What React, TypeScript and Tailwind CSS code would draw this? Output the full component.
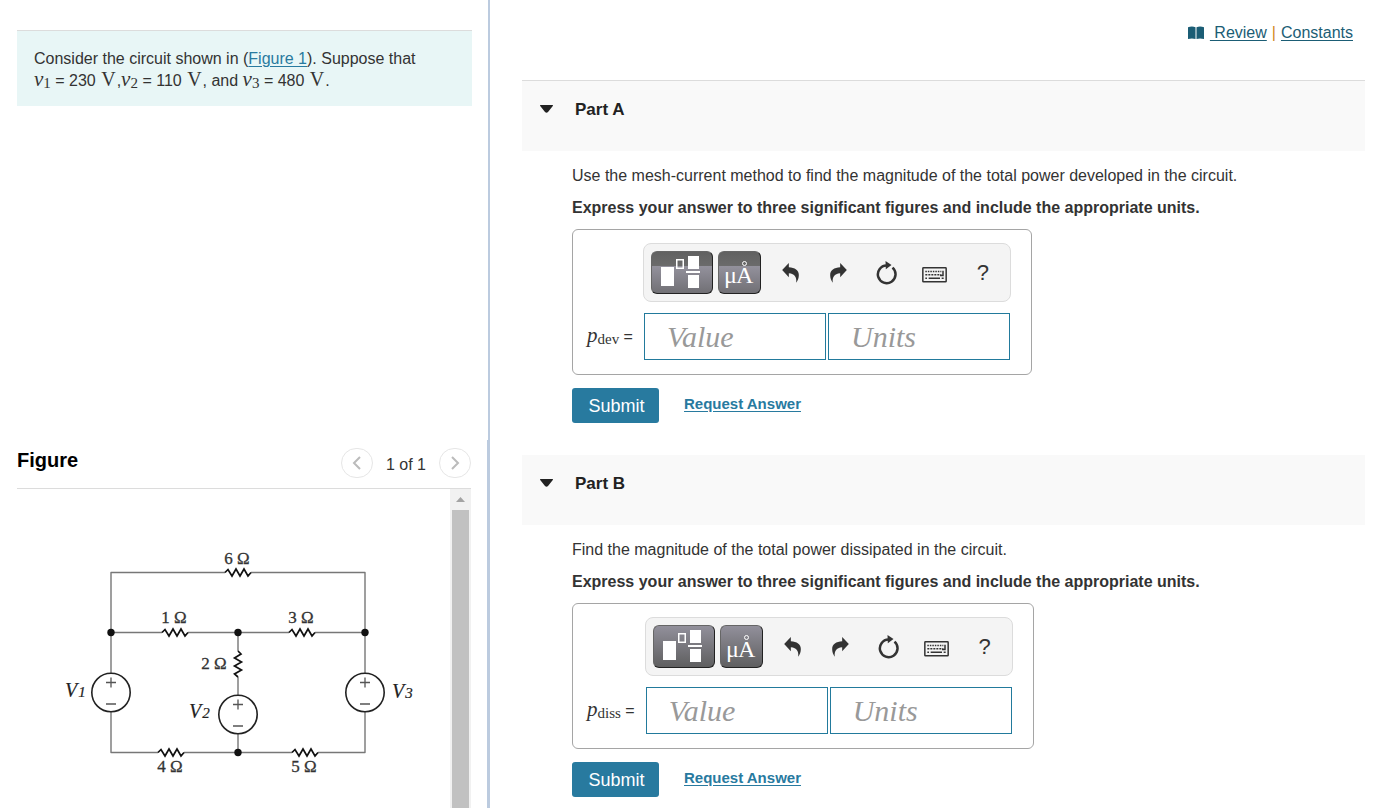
import React from "react";

const sans = "font-['Liberation_Sans',Arial,sans-serif]";
const serif = "font-['Liberation_Serif','Times_New_Roman',serif]";

function Sub({ base, sub }: { base: string; sub: string }) {
  return (
    <span className={serif}>
      <i className="text-[21px] leading-none">{base}</i>
      <span className="relative top-0.5 text-[15px] leading-none">{sub}</span>
    </span>
  );
}

function Volt() {
  return <span className={`${serif} mx-px text-[20px] leading-none`}>V</span>;
}

function Resistor({ x, y, vertical = false }: { x: number; y: number; vertical?: boolean }) {
  return (
    <g transform={`translate(${x} ${y})${vertical ? " rotate(90)" : ""}`}>
      <path d="M-13 0H13" stroke="#fff" strokeWidth="3" />
      <path d="M-13 0l3-3l4 6.500l4-7l4 7l4-7l4 7l3-3.500" fill="none" stroke="#111" strokeWidth="1.7" />
    </g>
  );
}

function Source({ x, y }: { x: number; y: number }) {
  return (
    <g fill="none" stroke="#222">
      <circle cx={x} cy={y} r="19.2" fill="#fff" strokeWidth="1.6" />
      <path d={`M${x - 5} ${y - 10}h10M${x} ${y - 15}v10M${x - 5} ${y + 11.5}h10`} stroke="#555" strokeWidth="1.3" />
    </g>
  );
}

const ohms = [
  { x: 220, y: 75, n: "6" },
  { x: 157, y: 134, n: "1" },
  { x: 284, y: 134, n: "3" },
  { x: 197, y: 180, n: "2" },
  { x: 153, y: 283, n: "4" },
  { x: 287, y: 283, n: "5" },
];

const sources = [
  { x: 48, y: 208, n: "1" },
  { x: 172, y: 229, n: "2" },
  { x: 375, y: 209, n: "3" },
];

function Circuit() {
  return (
    <svg width="433" height="319" viewBox="0 0 433 319" role="img" aria-label="Circuit diagram" className={`shrink-0 ${serif}`}>
      <path
        d="M94 83.5H348V263.5H94ZM94 143.5H348M221 143.5V263.5"
        fill="none"
        stroke="#777"
        strokeWidth="1.4"
        strokeLinejoin="round"
      />
      <Resistor x={221} y={83.5} />
      <Resistor x={158} y={143.5} />
      <Resistor x={285} y={143.5} />
      <Resistor x={154} y={263.5} />
      <Resistor x={288} y={263.5} />
      <Resistor x={221} y={175} vertical />
      <Source x={94} y={203.5} />
      <Source x={221} y={225.5} />
      <Source x={348} y={203.5} />
      <g fill="#111">
        <circle cx="94" cy="143.5" r="3.7" />
        <circle cx="221" cy="143.5" r="3.7" />
        <circle cx="348" cy="143.5" r="3.7" />
        <circle cx="221" cy="263.5" r="3.7" />
      </g>
      <g fill="#333" stroke="#333" strokeWidth="0.3" fontSize="17" textAnchor="middle">
        {ohms.map((o) => (
          <text key={o.n} x={o.x} y={o.y}>
            {o.n} Ω
          </text>
        ))}
      </g>
      <g fill="#222" stroke="#222" strokeWidth="0.2" fontStyle="italic" fontSize="20">
        {sources.map((s) => (
          <text key={s.n} x={s.x} y={s.y}>
            V<tspan fontSize="15" dx="1">{s.n}</tspan>
          </text>
        ))}
      </g>
    </svg>
  );
}

const arrowPath = "M0 21L20 0V13C38 14 50 22 50 36C50 46 47 53 42 59C44 44 38 32 20 31V43Z";

function UndoIcon() {
  return (
    <svg width="17" height="20" viewBox="0 0 50 60" fill="#333">
      <path d={arrowPath} />
    </svg>
  );
}

function RedoIcon() {
  return (
    <svg width="17" height="20" viewBox="0 0 50 60" fill="#333">
      <path d={arrowPath} transform="translate(50 0) scale(-1 1)" />
    </svg>
  );
}

function ResetIcon() {
  return (
    <svg width="21" height="24" viewBox="0 0 62 72">
      <path d="M49 20A26.5 26.5 0 1 1 31 13.5" fill="none" stroke="#333" strokeWidth="7.500" />
      <path d="M28 0L46 12L29 25Z" fill="#333" />
    </svg>
  );
}

function KeyboardIcon() {
  return (
    <svg width="25" height="16" viewBox="0 0 75 48" fill="none" stroke="#333">
      <rect x="2.5" y="2.5" width="70" height="42" rx="2" strokeWidth="4.5" />
      <path d="M10 13.5H58" strokeWidth="4.5" strokeDasharray="4.5 3" />
      <path d="M10 23.500H58" strokeWidth="4.5" strokeDasharray="6 3" />
      <path d="M63 11V25.500H54" strokeWidth="4.5" />
      <path d="M10 33.500h5M20 33.500h34M59 33.500h6" strokeWidth="4.5" />
    </svg>
  );
}

function TemplatesIcon() {
  return (
    <svg width="42" height="41" viewBox="0 0 42 41" fill="#fff">
      <rect x="0" y="15" width="13" height="19" />
      <rect x="15.750" y="7.750" width="6.500" height="8.500" fill="none" stroke="#fff" strokeWidth="1.500" />
      <rect x="27" y="4" width="11" height="13" />
      <rect x="25" y="19" width="14" height="2" />
      <rect x="27" y="23" width="11" height="13" />
    </svg>
  );
}

function SymbolsIcon() {
  return (
    <svg width="30" height="34" viewBox="0 0 30 34" fill="#fff" className={serif}>
      <text x="0" y="27" fontSize="24">μ</text>
      <text x="12" y="27" fontSize="24">A</text>
      <circle cx="20.500" cy="7.500" r="2" fill="none" stroke="#fff" />
    </svg>
  );
}

function BookIcon() {
  return (
    <svg width="16" height="14" viewBox="0 0 16 14" fill="#1b5d75" className="mr-1.5">
      <path d="M0 1.200Q4 -.2 7.500 1.200V13Q4 12 0 13ZM8.500 1.200Q12 -.2 16 1.200V13Q12 12 8.500 13Z" />
    </svg>
  );
}

const flatPalette = "bg-linear-to-b from-[#92909b] to-[#5f5f60]";
const splitPalette = "bg-[linear-gradient(#616161_0,#6b6b6b_34%,#93919c_35%,#717075_100%)]";

type PartProps = {
  title: string;
  question: string;
  sub: string;
  palette: string;
  divider?: boolean;
};

function Part({ title, question, sub, palette, divider = false }: PartProps) {
  const tool = "flex h-10 w-12 items-center justify-center text-[#333]";
  const key = "flex h-[43px] items-center justify-center rounded-md border border-[#666] border-r-[#222] border-b-[#222]";
  const field = `h-[47px] w-full min-w-0 border border-[#227a9c] bg-white pr-2 pl-[22px] text-[30px] italic text-[#333] outline-none placeholder:text-[#999] placeholder:opacity-100 ${serif}`;
  return (
    <section>
      <h2 className={divider ? "border-t border-[#dcdcdc] bg-[#f9f9f9]" : "bg-[#f9f9f9]"}>
        <button type="button" aria-expanded="true" className="flex h-[70px] w-full items-start pt-[18px] pl-[18px] text-left text-[17px] leading-[22px] font-bold text-[#222]">
          <svg width="13" height="8" viewBox="0 0 13 8" fill="#222" className="mt-1.5 mr-[22px]">
            <path d="M0 0H13Q13 1 12 2L8 7Q6.500 8.500 5 7L1 2Q0 1 0 0Z" />
          </svg>
          {title}
        </button>
      </h2>
      <div className="pt-[14px] pl-[50px] text-base leading-[22px] text-[#333]">
        <p>{question}</p>
        <p className="mt-2.5 font-bold">Express your answer to three significant figures and include the appropriate units.</p>
        <form onSubmit={(e) => e.preventDefault()}>
          <div className="mt-2.5 inline-grid grid-cols-[auto_minmax(0,368px)] items-center gap-x-[10px] gap-y-[11px] rounded-md border border-[#a5a5a5] pt-[13px] pr-5 pb-[14px] pl-[14px] align-top">
            <div className="col-start-2 flex h-[59px] items-center rounded-lg border border-[#dcdcdc] bg-[#f4f4f4] pl-[7px]" role="toolbar" aria-label={`${title} equation tools`}>
              <button type="button" aria-label="Templates" className={`${key} ${palette} mr-[5px] w-[62px]`}>
                <TemplatesIcon />
              </button>
              <button type="button" aria-label="Symbols" className={`${key} ${palette} mr-1.5 w-[43px]`}>
                <SymbolsIcon />
              </button>
              <button type="button" aria-label="Undo" className={tool}><UndoIcon /></button>
              <button type="button" aria-label="Redo" className={tool}><RedoIcon /></button>
              <button type="button" aria-label="Reset" className={tool}><ResetIcon /></button>
              <button type="button" aria-label="Keyboard shortcuts" className={`${tool} pt-1`}><KeyboardIcon /></button>
              <button type="button" aria-label="Help" className={`${tool} text-[22px]`}>?</button>
            </div>
            <label htmlFor={`value-${sub}`} className="whitespace-nowrap">
              <Sub base="p" sub={sub} /> =
            </label>
            <div className="flex gap-0.5 px-px">
              <input id={`value-${sub}`} placeholder="Value" className={field} />
              <input aria-label="Units" placeholder="Units" className={field} />
            </div>
          </div>
          <div className="mt-[13px] flex items-start">
            <button type="submit" className="h-[35px] w-[87px] rounded-[3px] bg-[#287a9f] pl-0.5 text-lg leading-none text-white">Submit</button>
            <a href="#request" className="mt-[5px] ml-[25px] text-[15px] font-bold text-[#287a9f] underline underline-offset-2">Request Answer</a>
          </div>
        </form>
      </div>
    </section>
  );
}

export default function App() {
  const pager = "flex h-[30px] w-8 items-center justify-center rounded-full border border-[#e6e6e6] text-[#bbb]";
  return (
    <div className={`grid min-h-screen grid-cols-[490px_minmax(0,1fr)] bg-white text-base text-[#333] ${sans}`}>
      <aside className="flex flex-col">
        <section className="min-h-[440px] border-r-2 border-[#bccbdf] pt-[30px] pr-4 pl-[17px]">
          <p className="border-t border-[#dcdcdc] bg-[#e8f6f6] px-[17px] pt-[18px] pb-[15px] leading-5">
            Consider the circuit shown in (<a href="#figure" className="text-[#287a9f] underline underline-offset-2">Figure 1</a>). Suppose that{" "}
            <span className="inline-block whitespace-nowrap">
              <Sub base="v" sub="1" /> = 230 <Volt />,<Sub base="v" sub="2" /> = 110 <Volt />, and <Sub base="v" sub="3" /> = 480 <Volt />.
            </span>
          </p>
        </section>
        <section id="figure" className="flex flex-1 flex-col border-r-3 border-[#bccbdf] pr-4 pl-[17px]">
          <header className="flex h-[49px] items-start border-b border-[#dcdcdc] pt-2">
            <h2 className="mr-auto text-xl leading-6 font-bold text-black">Figure</h2>
            <button type="button" aria-label="Previous figure" className={pager}>
              <svg width="9" height="14" viewBox="0 0 9 14" fill="none" stroke="currentColor" strokeWidth="2"><path d="M8 1L2 7L8 13" /></svg>
            </button>
            <span className="mx-[13px] mt-1.5 leading-[22px]">1 of 1</span>
            <button type="button" aria-label="Next figure" className={pager}>
              <svg width="9" height="14" viewBox="0 0 9 14" fill="none" stroke="currentColor" strokeWidth="2"><path d="M1 1L7 7L1 13" /></svg>
            </button>
          </header>
          <div className="flex flex-1">
            <Circuit />
            <div className="flex flex-1 flex-col items-center bg-[#f1f1f1]">
              <div className="flex h-[21px] items-center">
                <svg width="9" height="5" viewBox="0 0 9 5" fill="#a3a3a3"><path d="M4.500 0L9 5H0Z" /></svg>
              </div>
              <div className="w-[17px] flex-1 bg-[#c1c1c1]" />
            </div>
          </div>
        </section>
      </aside>
      <main className="pr-[22px] pl-8">
        <nav className="flex h-20 items-start justify-end pt-[22px] pr-3 leading-[22px] text-[#1b5d75]">
          <div className="flex items-center">
            <BookIcon />
            <a href="#review" className="whitespace-pre underline underline-offset-2">{" Review"}</a>
            <span className="mx-[5px] text-[#d08a1d]">|</span>
            <a href="#constants" className="underline underline-offset-2">Constants</a>
          </div>
        </nav>
        <div className="flex flex-col gap-8">
          <Part
            title="Part A"
            question="Use the mesh-current method to find the magnitude of the total power developed in the circuit."
            sub="dev"
            palette={splitPalette}
            divider
          />
          <Part
            title="Part B"
            question="Find the magnitude of the total power dissipated in the circuit."
            sub="diss"
            palette={flatPalette}
          />
        </div>
      </main>
    </div>
  );
}
